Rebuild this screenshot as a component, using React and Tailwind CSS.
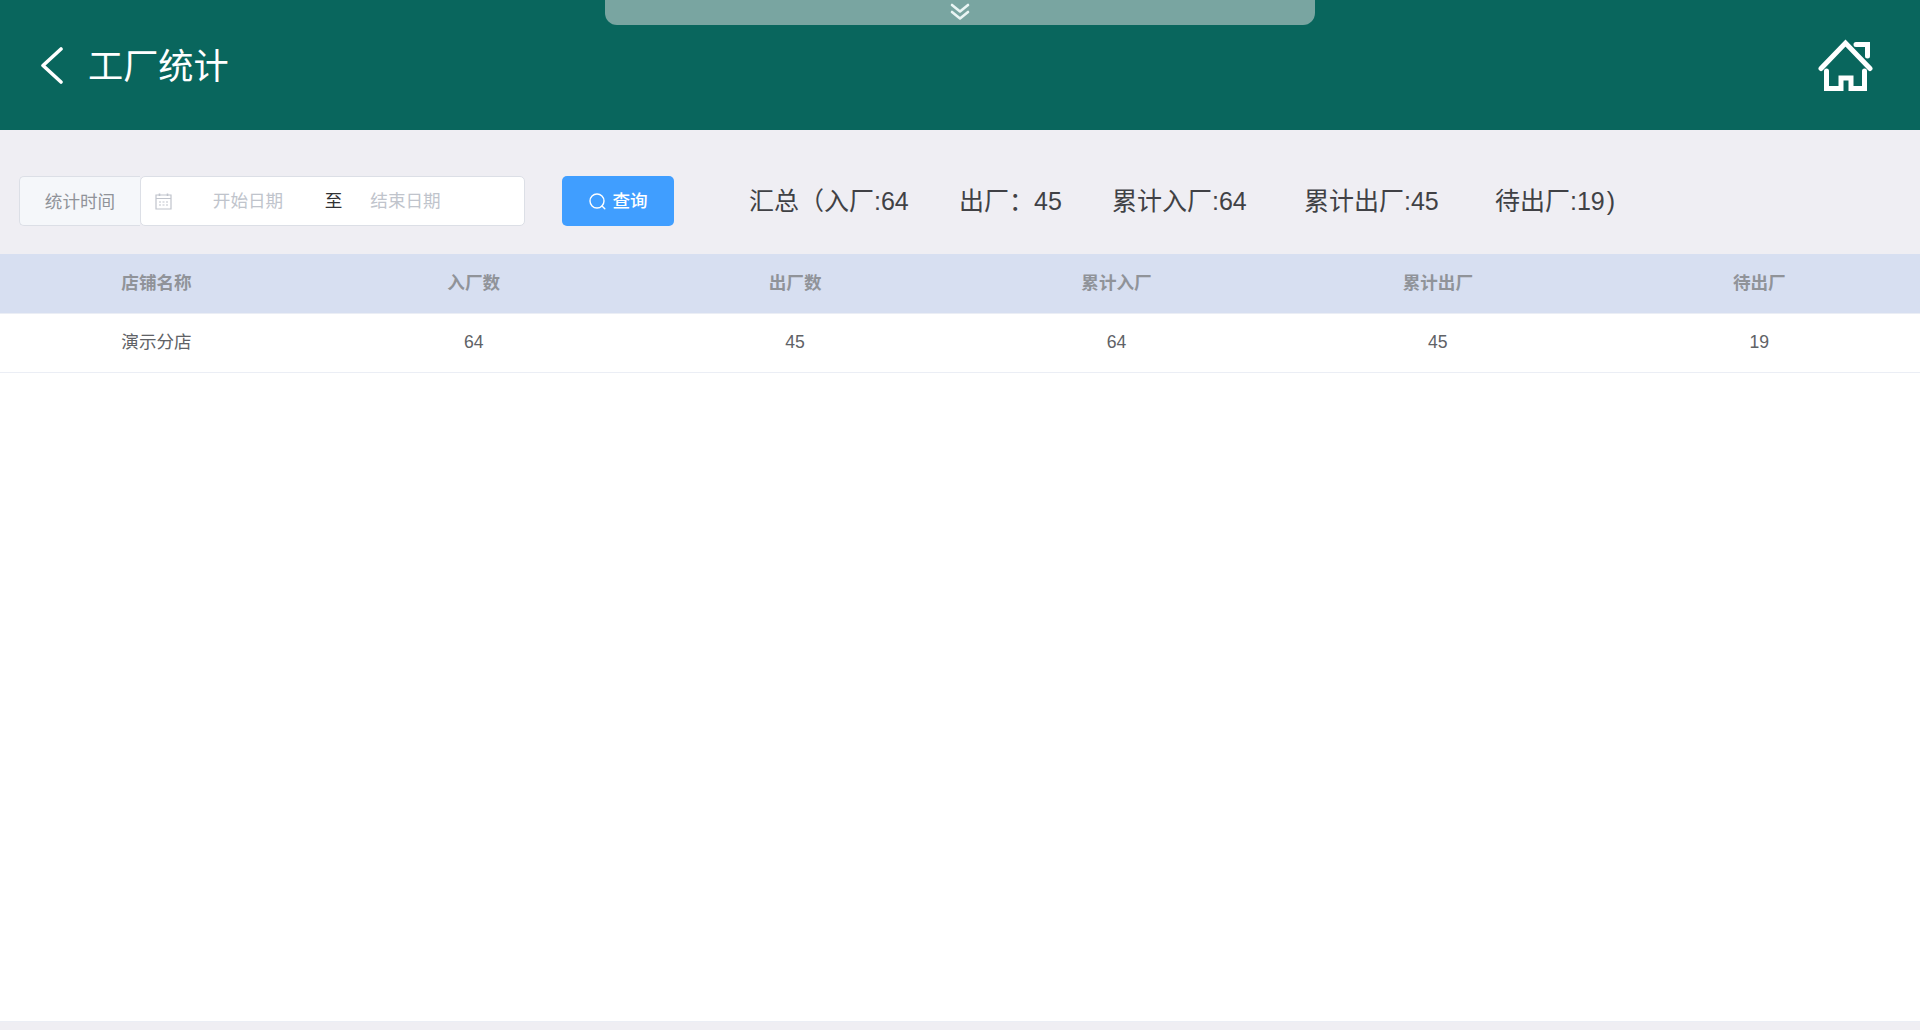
// src/pages/FactoryStats.jsx
import { useState } from 'react';

const SUMMARY = [
  { text: '汇总（入厂:64',  width: 'w-[210px]' },
  { text: '出厂：45',       width: 'w-[153px]' },
  { text: '累计入厂:64',    width: 'w-[192px]' },
  { text: '累计出厂:45',    width: 'w-[191px]' },
  { text: '待出厂:19',      width: 'w-auto' },
];

const COLUMNS = [
  { key: 'shop',     label: '店铺名称' },
  { key: 'in',       label: '入厂数' },
  { key: 'out',      label: '出厂数' },
  { key: 'totalIn',  label: '累计入厂' },
  { key: 'totalOut', label: '累计出厂' },
  { key: 'pending',  label: '待出厂' },
];

const ROWS = [
  { shop: '演示分店', in: 64, out: 45, totalIn: 64, totalOut: 45, pending: 19 },
];

const BackIcon = () => (
  <svg className="w-[24px] h-[38px]" viewBox="0 0 24 38" fill="none" stroke="currentColor" strokeWidth="3.6" strokeLinecap="round" strokeLinejoin="round">
    <path d="M21 3 3 19.500 21 36" />
  </svg>
);

const HomeIcon = () => (
  <svg className="w-[56px] h-[54px]" viewBox="0 0 56 54" fill="none" stroke="currentColor" strokeWidth="5" strokeLinecap="round">
    <path d="M3 30.500 27.500 5 52 30.500" />
    <path d="M38 6.500H49.500V18" />
    <path d="M8.500 33V50.500H23V40H33V50.500H46.500V33" />
  </svg>
);

const DoubleDownIcon = () => (
  <svg className="w-[20px] h-[18px]" viewBox="0 0 20 18" fill="none" stroke="currentColor" strokeWidth="2.6" strokeLinecap="round" strokeLinejoin="round">
    <path d="M2 2l8 6.500L18 2M2 9l8 6.500L18 9" />
  </svg>
);

const CalendarIcon = () => (
  <svg className="w-[17px] h-[17px]" viewBox="0 0 17 17" fill="none" stroke="currentColor" strokeWidth="1.200">
    <path d="M1 2h15v14H1zM1 5.500h15" />
    <path d="M4.500.5v2.500M12.500.5v2.500" strokeWidth="1.600" />
    <path d="M4 9h2M7.500 9h2M11 9h2M4 12h2M7.500 12h2M11 12h2" />
  </svg>
);

const SearchIcon = () => (
  <svg className="w-[17px] h-[17px]" viewBox="0 0 17 17" fill="none" stroke="currentColor" strokeWidth="1.400" strokeLinecap="round">
    <circle cx="8" cy="8" r="7" />
    <path d="M13 13l2.800 2.800" />
  </svg>
);

const App = () => {
  const [start, setStart] = useState('');
  const [end,   setEnd]   = useState('');

  return (
    <div className="h-[1030px] flex flex-col overflow-hidden bg-[#efeef3] font-['Liberation_Sans','Noto_Sans_CJK_SC',sans-serif]">

      {/* Header */}
      <header className="relative h-[130px] shrink-0 flex items-center justify-between pl-[40px] pr-[46px] bg-[#09665d] text-white">
        <button className="flex items-center gap-[24px]">
          <BackIcon />
          <span className="pt-[3px] text-[35.2px] leading-[50px]">工厂统计</span>
        </button>
        <button>
          <HomeIcon />
        </button>

        {/* Pull-down handle */}
        <div className="absolute top-0 left-[605px] w-[710px] h-[25px] flex justify-center pt-[3px] rounded-b-[12px] bg-[#79a5a1] text-[#e9f5f4]">
          <DoubleDownIcon />
        </div>
      </header>

      {/* Filter bar */}
      <div className="h-[124px] shrink-0 flex items-center pl-[19px] pt-[18px]">
        <div className="flex h-[50px] text-[17.6px]">
          <span className="w-[121px] flex items-center justify-center pt-[3px] rounded-l-[5px] border border-r-0 border-[#dcdfe6] bg-[#f5f7fa] text-[#909399]">
            统计时间
          </span>
          <div className="w-[385px] flex items-center pl-[14px] rounded-[5px] border border-[#dcdfe6] bg-white">
            <span className="text-[#c0c4cc]"><CalendarIcon /></span>
            <input
              value={start}
              onChange={e => setStart(e.target.value)}
              placeholder="开始日期"
              className="w-[152px] text-center outline-none placeholder:text-[#c0c4cc]"
            />
            <span className="w-[19px] text-center text-[#303133]">至</span>
            <input
              value={end}
              onChange={e => setEnd(e.target.value)}
              placeholder="结束日期"
              className="w-[125px] text-center outline-none placeholder:text-[#c0c4cc]"
            />
          </div>
        </div>

        <button className="ml-[37px] w-[112px] h-[50px] flex items-center justify-center gap-[6px] pl-[1px] rounded-[5px] bg-[#409eff] text-[17.6px] font-medium text-white">
          <SearchIcon />
          <span>查询</span>
        </button>

        <div className="ml-[75px] pt-[2px] flex text-[25px] text-[#404145] whitespace-nowrap">
          {SUMMARY.map(item => (
            <span key={item.text} className={item.width}>{item.text}</span>
          ))}
          <span className="ml-[2px]">)</span>
        </div>
      </div>

      {/* Table */}
      <div className="h-[768px] shrink-0 bg-white border-b border-[#ebeef5] text-[17.6px]">
        <table className="w-full table-fixed border-collapse text-center">
          <colgroup>
            <col className="w-[313px]" />
            <col span="5" />
          </colgroup>
          <thead>
            <tr className="h-[59px] bg-[#d7dff1] text-[#909399] border-b border-[#ebeef5]">
              {COLUMNS.map(col => (
                <th key={col.key} className="p-0 font-bold">{col.label}</th>
              ))}
            </tr>
          </thead>
          <tbody>
            {ROWS.map(row => (
              <tr key={row.shop} className="h-[59px] text-[#606266] border-b border-[#ebeef5]">
                {COLUMNS.map(col => (
                  <td key={col.key} className="p-0">{row[col.key]}</td>
                ))}
              </tr>
            ))}
          </tbody>
        </table>
      </div>
    </div>
  );
};

export default App;
